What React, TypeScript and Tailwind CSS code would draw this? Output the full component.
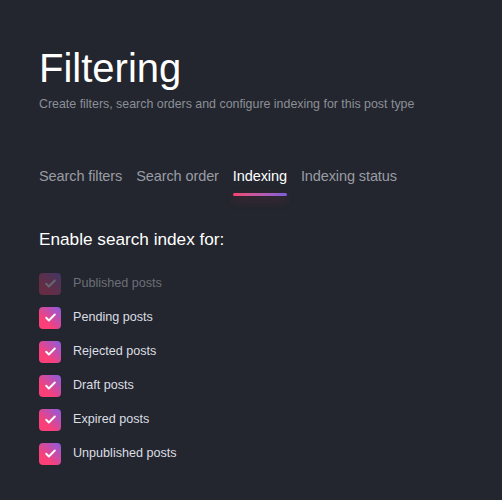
import React, { useState } from 'react';

const options = [
    { key: 'published', label: 'Published posts', disabled: true },
    { key: 'pending', label: 'Pending posts' },
    { key: 'rejected', label: 'Rejected posts' },
    { key: 'draft', label: 'Draft posts' },
    { key: 'expired', label: 'Expired posts' },
    { key: 'unpublished', label: 'Unpublished posts' },
];

const tabs = ['Search filters', 'Search order', 'Indexing', 'Indexing status'];

const Check: React.FC<{ disabled?: boolean }> = ({ disabled }) => (
    <span
        className={`flex h-[22px] w-[22px] shrink-0 items-center justify-center rounded-[4px] bg-[linear-gradient(to_top_right,#fb3f78_30%,#8a5ce0)] ${
            disabled ? 'opacity-30' : ''
        }`}
    >
        <svg width="13" height="13" viewBox="0 0 24 24" fill="none" stroke="white" strokeWidth="3.5" strokeLinecap="round" strokeLinejoin="round">
            <path d="M4 12.5l5 5L20 6.5" />
        </svg>
    </span>
);

export default function App() {
    const [active, setActive] = useState('Indexing');
    const [checked] = useState(options.map(o => o.key));

    return (
        <div className="min-h-[500px] w-full bg-[#23262e] px-[39px] pt-[44px] font-['Liberation_Sans',Arial,sans-serif]">
            <h1 className="text-[40px] leading-[48px] font-normal text-white">Filtering</h1>
            <p className="mt-[3px] text-[12.4px] text-[#8c8f97]">
                Create filters, search orders and configure indexing for this post type
            </p>

            <div className="mt-[52px] flex gap-[14px]">
                {tabs.map(t => (
                    <button
                        key={t}
                        onClick={() => setActive(t)}
                        className={`relative pb-[10px] text-[14.5px] leading-[20px] tracking-[-0.1px] ${
                            active === t ? 'text-white' : 'text-[#9a9ca4]'
                        }`}
                    >
                        {t}
                        {active === t && (
                            <span className="absolute bottom-0 left-0 right-0 h-[3px] rounded-full bg-gradient-to-r from-[#f6406f] to-[#7d5cdc] shadow-[0_4px_10px_rgba(246,64,111,0.25)]" />
                        )}
                    </button>
                ))}
            </div>

            <h2 className="mt-[31px] text-[17.2px] leading-[24px] text-white">Enable search index for:</h2>

            <div className="mt-[22px] flex flex-col gap-[12px]">
                {options.map(o => (
                    <label key={o.key} className="flex h-[22px] items-center gap-[12px]">
                        {checked.includes(o.key) && <Check disabled={o.disabled} />}
                        <span className={`text-[12.6px] ${o.disabled ? 'text-[#6c6f77]' : 'text-[#dcdee4]'}`}>
                            {o.label}
                        </span>
                    </label>
                ))}
            </div>
        </div>
    );
}
